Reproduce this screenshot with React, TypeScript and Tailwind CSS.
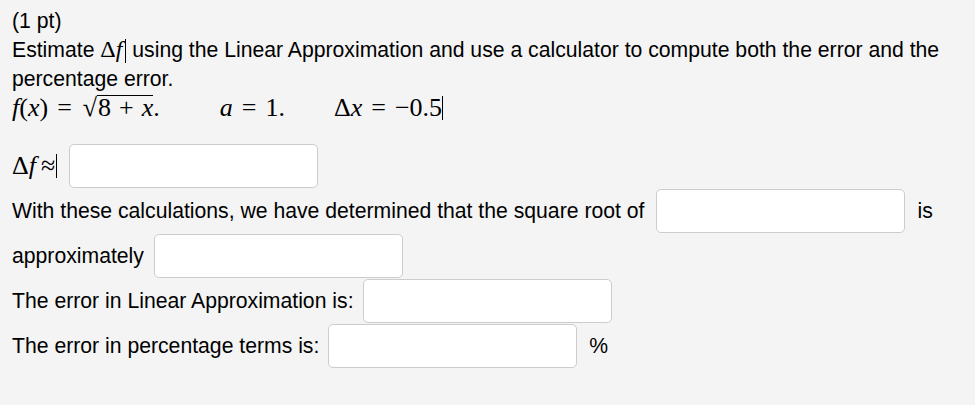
import React from 'react';

const Box = ({ className = '' }: { className?: string }) => (
  <span className={`inline-block w-[249px] h-[44px] bg-white border border-[#cccccc] rounded-[5px] align-middle ${className}`} />
);

const Caret = ({ className = '' }: { className?: string }) => (
  <span className={`inline-block w-px h-[24px] bg-black align-middle ${className}`} />
);

const Rel = ({ children }: { children: React.ReactNode }) => <span className="mx-[9px]">{children}</span>;

export default function App() {
  return (
    <div className="min-h-[405px] bg-[#f4f4f4] text-black px-3 pt-[6px] text-[21.2px] leading-[29px] font-['Liberation_Sans',Arial,sans-serif]">
      <div>(1 pt)</div>
      <div>
        Estimate{' '}
        <span className="font-['Liberation_Serif',serif] text-[24px] leading-none">
          Δ<i>f</i>
        </span>
        <Caret className="ml-[3px] h-[22px]" /> using the Linear Approximation and use a calculator to compute both the error and the percentage error.
      </div>
      <div className="flex items-center h-[29px] leading-[29px] font-['Liberation_Serif',serif] text-[26px] whitespace-nowrap">
        <span className="flex items-center">
          <i>f</i>(<i>x</i>)<Rel>=</Rel>
          <span className="ml-[2px]">√</span>
          <span className="flex items-center border-t border-black leading-[24px] pl-[1px]">
            <span>8</span>
            <span className="mx-[8px]">+</span>
            <i>x</i>
          </span>
          <span>.</span>
        </span>
        <span className="ml-[60px] flex items-center">
          <i>a</i>
          <Rel>=</Rel>1.
        </span>
        <span className="ml-[49px] flex items-center">
          Δ<i>x</i>
          <Rel>=</Rel>−0.5
        </span>
        <Caret />
      </div>
      <div className="flex items-center mt-[21px] h-[45px]">
        <span className="flex items-center font-['Liberation_Serif',serif] text-[26px] whitespace-nowrap">
          Δ<i>f</i>
          <span className="ml-[5px]">≈</span>
        </span>
        <Caret className="ml-[1px]" />
        <Box className="ml-[12px]" />
      </div>
      <div className="flex items-center h-[45px]">
        <span>With these calculations, we have determined that the square root of</span>
        <Box className="ml-[12px]" />
        <span className="ml-[12px]">is</span>
      </div>
      <div className="flex items-center h-[45px]">
        <span>approximately</span>
        <Box className="ml-[10px]" />
      </div>
      <div className="flex items-center h-[45px]">
        <span>The error in Linear Approximation is:</span>
        <Box className="ml-[9px]" />
      </div>
      <div className="flex items-center h-[45px]">
        <span>The error in percentage terms is:</span>
        <Box className="ml-[9px]" />
        <span className="ml-[12px]">%</span>
      </div>
    </div>
  );
}
